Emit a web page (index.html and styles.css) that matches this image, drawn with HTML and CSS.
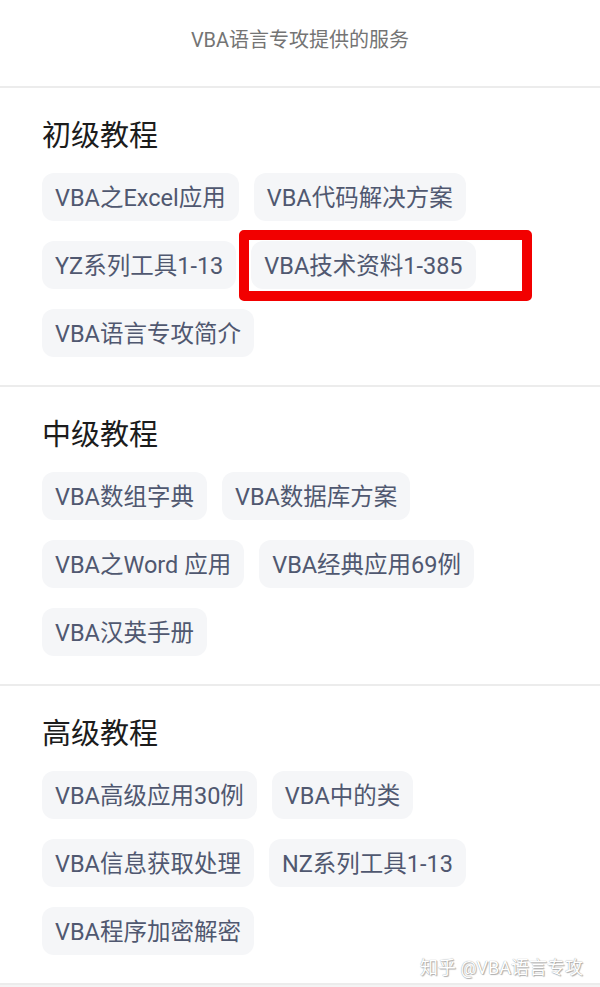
FILE: index.html
```html
<!DOCTYPE html>
<html lang="zh-CN">
<head>
    <meta charset="UTF-8">
    <meta name="viewport" content="width=device-width, initial-scale=1.0">
    <title>VBA语言专攻提供的服务</title>
    <link rel="stylesheet" href="styles.css">
</head>
<body>
    <div class="page">
        <div class="header">VBA语言专攻提供的服务</div>

        <div class="section">
            <h2 class="section-title">初级教程</h2>
            <div class="tags">
                <span class="tag">VBA之Excel应用</span>
                <span class="tag">VBA代码解决方案</span>
                <span class="tag">YZ系列工具1-13</span>
                <span class="tag tag-marked">VBA技术资料1-385<span class="mark"></span></span>
                <span class="tag">VBA语言专攻简介</span>
            </div>
        </div>

        <div class="section">
            <h2 class="section-title">中级教程</h2>
            <div class="tags">
                <span class="tag">VBA数组字典</span>
                <span class="tag">VBA数据库方案</span>
                <span class="tag">VBA之Word 应用</span>
                <span class="tag">VBA经典应用69例</span>
                <span class="tag">VBA汉英手册</span>
            </div>
        </div>

        <div class="section">
            <h2 class="section-title">高级教程</h2>
            <div class="tags">
                <span class="tag">VBA高级应用30例</span>
                <span class="tag">VBA中的类</span>
                <span class="tag">VBA信息获取处理</span>
                <span class="tag">NZ系列工具1-13</span>
                <span class="tag">VBA程序加密解密</span>
            </div>
        </div>

        <div class="footer"></div>
        <div class="watermark">知乎 @VBA语言专攻</div>
    </div>
</body>
</html>
```

FILE: styles.css
```css
body {
    margin: 0;
    background-color: #ffffff;
    font-family: Roboto, "Noto Sans CJK SC", sans-serif;
}
.page {
    position: relative;
    width: 600px;
    min-height: 987px;
    overflow: hidden;
}
.header {
    height: 86px;
    line-height: 80px;
    text-align: center;
    font-size: 20px;
    color: #747474;
    border-bottom: 2px solid #ececec;
}
.section {
    padding: 28px 40px 28px 42px;
    border-bottom: 2px solid #ececec;
}
.section:last-of-type {
    border-bottom: none;
}
.section-title {
    margin: 0 0 17px 0;
    font-size: 29px;
    line-height: 40px;
    font-weight: normal;
    color: #1c1c1c;
}
.tags {
    display: flex;
    flex-wrap: wrap;
    gap: 20px 15px;
}
.tag {
    display: inline-block;
    height: 48px;
    line-height: 50px;
    padding: 0 13px;
    font-size: 23.5px;
    color: #505870;
    background-color: #f5f6f8;
    border-radius: 12px;
    white-space: nowrap;
}
.tag-marked {
    position: relative;
}
/* red frame drawn over the highlighted tag */
.mark {
    position: absolute;
    left: -12px;
    top: -11px;
    right: -56px;
    bottom: -12px;
    border: 10px solid #f20000;
    border-radius: 5px;
}
.footer {
    height: 10px;
    background-color: #f4f4f4;
}
.watermark {
    position: absolute;
    right: 17px;
    bottom: 16px;
    font-size: 18px;
    color: #ffffff;
    text-shadow: 0 0 1px #8c8c8c, 1px 1px 1px #b0b0b0;
}
```
